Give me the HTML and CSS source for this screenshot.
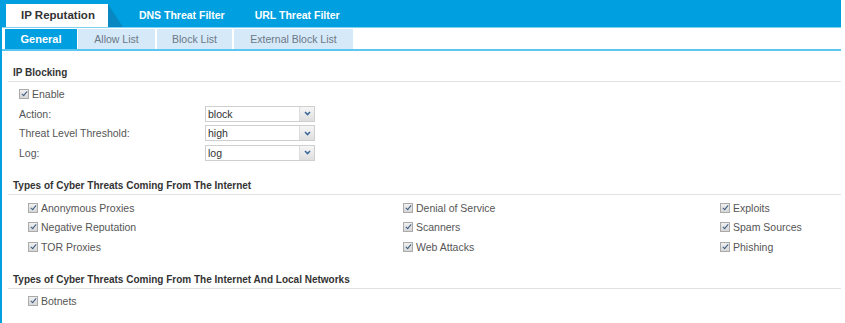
FILE: index.html
```html
<!DOCTYPE html>
<html lang="en">
<head>
    <meta charset="UTF-8">
    <title>IP Reputation</title>
    <link rel="stylesheet" href="styles.css">
</head>
<body>
    <div class="panel">
        <div class="top-tabs">
            <div class="tab active">IP Reputation</div>
            <div class="tab">DNS Threat Filter</div>
            <div class="tab">URL Threat Filter</div>
        </div>
        <div class="sub-tabs">
            <div class="sub-tab current">General</div>
            <div class="sub-tab allow">Allow List</div>
            <div class="sub-tab block">Block List</div>
            <div class="sub-tab wide">External Block List</div>
        </div>

        <div class="section first">
            <div class="section-title">IP Blocking</div>
            <div class="form-row">
                <label class="check"><span class="cb"></span>Enable</label>
            </div>
            <div class="form-row">
                <span class="label">Action:</span>
                <div class="select"><span class="value">block</span><span class="arrow"><svg width="7" height="5" viewBox="0 0 7 5"><path d="M1 1 L3.5 3.5 L6 1" fill="none" stroke="#3b6a9a" stroke-width="1.6"/></svg></span></div>
            </div>
            <div class="form-row">
                <span class="label">Threat Level Threshold:</span>
                <div class="select"><span class="value">high</span><span class="arrow"><svg width="7" height="5" viewBox="0 0 7 5"><path d="M1 1 L3.5 3.5 L6 1" fill="none" stroke="#3b6a9a" stroke-width="1.6"/></svg></span></div>
            </div>
            <div class="form-row">
                <span class="label">Log:</span>
                <div class="select"><span class="value">log</span><span class="arrow"><svg width="7" height="5" viewBox="0 0 7 5"><path d="M1 1 L3.5 3.5 L6 1" fill="none" stroke="#3b6a9a" stroke-width="1.6"/></svg></span></div>
            </div>
        </div>

        <div class="section">
            <div class="section-title">Types of Cyber Threats Coming From The Internet</div>
            <div class="threats">
                <label class="check"><span class="cb"></span>Anonymous Proxies</label>
                <label class="check"><span class="cb"></span>Denial of Service</label>
                <label class="check"><span class="cb"></span>Exploits</label>
                <label class="check"><span class="cb"></span>Negative Reputation</label>
                <label class="check"><span class="cb"></span>Scanners</label>
                <label class="check"><span class="cb"></span>Spam Sources</label>
                <label class="check"><span class="cb"></span>TOR Proxies</label>
                <label class="check"><span class="cb"></span>Web Attacks</label>
                <label class="check"><span class="cb"></span>Phishing</label>
            </div>
        </div>

        <div class="section last">
            <div class="section-title">Types of Cyber Threats Coming From The Internet And Local Networks</div>
            <div class="threats">
                <label class="check"><span class="cb"></span>Botnets</label>
            </div>
        </div>
    </div>
</body>
</html>
```

FILE: styles.css
```css
body {
    margin: 0;
    font-family: 'Liberation Sans', Arial, sans-serif;
    font-size: 10.5px;
    color: #555;
    background: white;
}
.panel {
    width: 839px;
    height: 323px;
    border-left: 2px solid #00a0e0;
}
.top-tabs {
    display: flex;
    align-items: flex-end;
    height: 27px;
    padding-left: 4px;
    background: #009fdf;
}
.tab {
    height: 23px;
    line-height: 23px;
    padding: 0 15px;
    font-size: 10.5px;
    font-weight: bold;
    color: white;
}
.tab.active {
    position: relative;
    padding: 0 13px 0 15px;
    margin-right: 16px;
    background: white;
    color: #333;
    font-size: 11.5px;
}
.tab.active::after {
    content: '';
    position: absolute;
    top: 0;
    right: -15px;
    width: 15px;
    height: 23px;
    background: #0887c2;
    clip-path: polygon(0 0, 100% 100%, 0 100%);
}
.tab + .tab + .tab {
    margin-left: 0;
}
.sub-tabs {
    display: flex;
    height: 20px;
    padding: 1px 0 0 3px;
    border-top: 1px solid #7fd2f2;
    border-bottom: 2px solid #5cc6f2;
}
.sub-tab {
    line-height: 20px;
    text-align: center;
    background: #d6e9f8;
    color: #6b7886;
}
.sub-tab.current {
    width: 72px;
    background: #009fdf;
    color: white;
    font-weight: bold;
    font-size: 11px;
}
.sub-tab.allow {
    width: 77px;
    margin-left: 1px;
}
.sub-tab.block {
    width: 75px;
    margin-left: 2px;
}
.sub-tab.wide {
    width: 119px;
    margin-left: 2px;
}
.section {
    margin-top: 15px;
}
.section.first {
    margin-top: 14px;
}
.section.last {
    margin-top: 16px;
}
.section-title {
    margin-left: 6px;
    padding-left: 5px;
    height: 16px;
    line-height: 16px;
    font-weight: bold;
    font-size: 10px;
    color: #333;
    border-bottom: 1px solid #e2e2e2;
}
.form-row {
    display: flex;
    align-items: center;
    height: 19.7px;
    padding-left: 17px;
}
.section-title + .form-row {
    margin-top: 2px;
}
.label {
    width: 186px;
}
.check {
    display: flex;
    align-items: center;
    gap: 3px;
}
.cb {
    position: relative;
    box-sizing: border-box;
    width: 10px;
    height: 10px;
    border: 1px solid #aaaaaa;
    background: linear-gradient(#f0f0f0, #d6d6d6);
}
.cb::after {
    content: '';
    position: absolute;
    left: 2.5px;
    top: 0;
    width: 2px;
    height: 5px;
    border: solid #3a5a80;
    border-width: 0 1.5px 1.5px 0;
    transform: rotate(40deg);
}
.select {
    display: flex;
    box-sizing: border-box;
    width: 110px;
    height: 16px;
    border: 1px solid #cfcfcf;
    background: white;
    color: #333;
}
.value {
    flex: 1;
    padding-left: 2px;
    line-height: 14px;
}
.arrow {
    display: flex;
    align-items: center;
    justify-content: center;
    width: 14px;
    border-left: 1px solid #dcdcdc;
    background: linear-gradient(#f6f6f6, #dedede);
}
.threats {
    display: grid;
    grid-template-columns: 375px 317px auto;
    grid-auto-rows: 19.5px;
    margin-top: 3px;
    padding-left: 26px;
}
.section.last .threats {
    margin-top: 2px;
}
```
